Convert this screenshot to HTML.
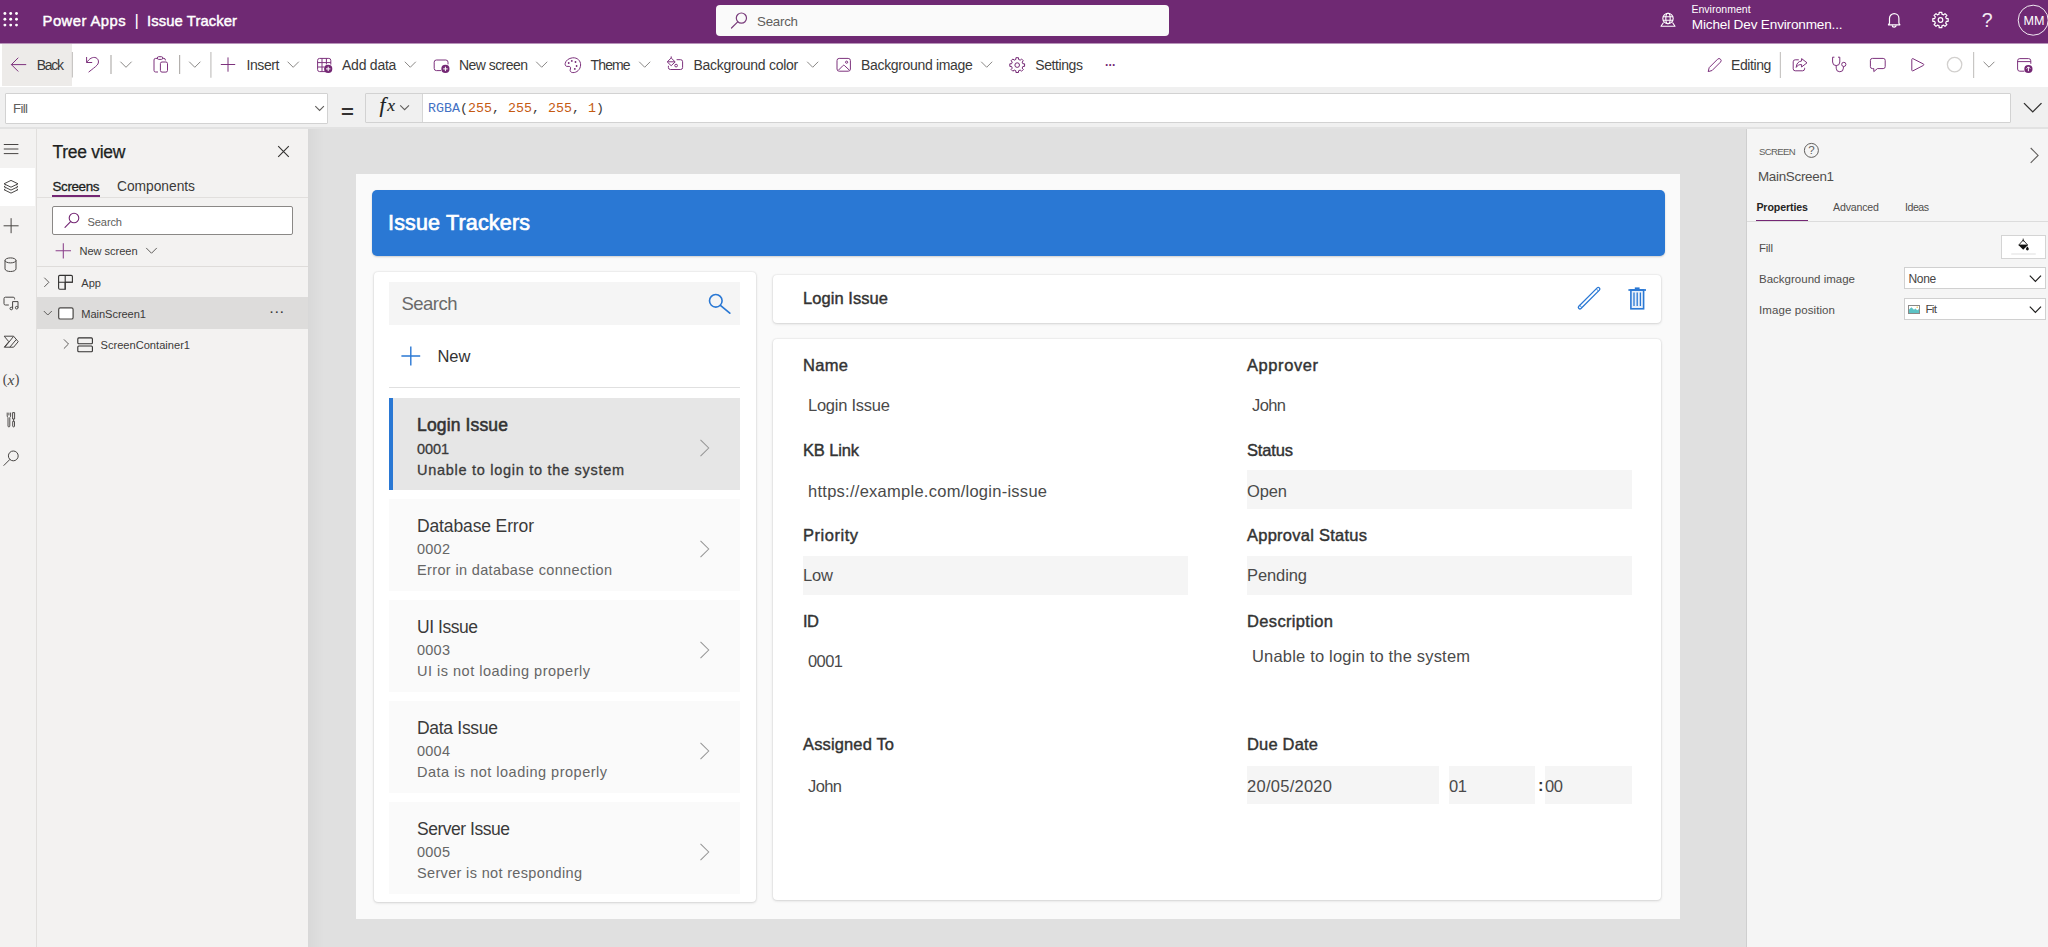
<!DOCTYPE html>
<html lang="en"><head><meta charset="utf-8"><title>Issue Tracker - Power Apps</title>
<style>
html,body{margin:0;padding:0;}
body{width:2048px;height:947px;overflow:hidden;position:relative;background:#e0e0e0;font-family:'Liberation Sans', sans-serif;}
.b{position:absolute;box-sizing:border-box;}
.t{position:absolute;white-space:pre;line-height:1;}
.i{position:absolute;overflow:visible;}
</style></head>
<body>
<div class="b" style="left:0px;top:0px;width:2048px;height:43px;background:#6f2973;"></div>
<div class="b" style="left:0px;top:43px;width:2048px;height:1px;background:#b794b9;"></div>
<div class="b" style="left:716px;top:5px;width:453px;height:30.5px;background:#fafafa;border-radius:4px;"></div>
<div class="b" style="left:0px;top:44px;width:2048px;height:43px;background:#ffffff;"></div>
<div class="b" style="left:2px;top:44px;width:70px;height:42px;background:#edebe9;"></div>
<div class="b" style="left:0px;top:87px;width:2048px;height:41px;background:#f0f0f0;"></div>
<div class="b" style="left:5px;top:93px;width:323px;height:30.6px;background:#ffffff;border:1px solid #d2d2d2;border-radius:1px;"></div>
<div class="b" style="left:364.5px;top:92.5px;width:1646.9px;height:30.1px;background:#ffffff;border:1px solid #d2d2d2;border-radius:1px;"></div>
<div class="b" style="left:365.5px;top:93.5px;width:57.5px;height:28.1px;background:#f0f0f0;border-right:1px solid #d6d6d6;"></div>
<div class="b" style="left:0px;top:128px;width:37px;height:819px;background:#f3f2f1;border-right:1px solid #e1dfdd;"></div>
<div class="b" style="left:0px;top:168px;width:35px;height:38px;background:#ffffff;"></div>
<div class="b" style="left:37px;top:128px;width:271px;height:819px;background:#f3f2f1;"></div>
<div class="b" style="left:308px;top:128px;width:16px;height:819px;background:linear-gradient(90deg,#d8d8d8,#e0e0e0);"></div>
<div class="b" style="left:37px;top:197px;width:271px;height:1px;background:#e1dfdd;"></div>
<div class="b" style="left:52px;top:195px;width:48px;height:2px;background:#742774;"></div>
<div class="b" style="left:52px;top:206px;width:241px;height:29px;background:#ffffff;border:1px solid #8a8886;border-radius:2px;"></div>
<div class="b" style="left:37px;top:266px;width:271px;height:1.2px;background:#dedcda;"></div>
<div class="b" style="left:37px;top:297.3px;width:271px;height:31.3px;background:#dddcdb;"></div>
<div class="b" style="left:1745.6px;top:128px;width:1.4px;height:819px;background:#cfcfcf;"></div>
<div class="b" style="left:1747px;top:128px;width:301px;height:819px;background:#f5f5f5;"></div>
<div class="b" style="left:1747px;top:221px;width:301px;height:1px;background:#dcdcdc;"></div>
<div class="b" style="left:1756px;top:219.6px;width:52px;height:1.8px;background:#742774;"></div>
<div class="b" style="left:2001px;top:235px;width:45px;height:23.6px;background:#ffffff;border:1px solid #d4d4d4;"></div>
<div class="b" style="left:2011px;top:252.8px;width:25px;height:2.6px;background:#efefef;border-radius:1px;"></div>
<div class="b" style="left:1904px;top:267px;width:142.2px;height:22.4px;background:#ffffff;border:1px solid #d0d0d0;"></div>
<div class="b" style="left:1904px;top:297.6px;width:142.2px;height:22.8px;background:#ffffff;border:1px solid #d0d0d0;"></div>
<div class="b" style="left:0px;top:127px;width:2048px;height:1.6px;background:#e2e2e2;"></div>
<div class="b" style="left:356.1px;top:174.4px;width:1324.2px;height:745.1px;background:#fafafa;"></div>
<div class="b" style="left:372px;top:190px;width:1293px;height:66px;background:#2a78d4;border-radius:5px;box-shadow:0 1px 2px rgba(0,0,0,.18);"></div>
<div class="b" style="left:374px;top:272px;width:382px;height:630px;background:#ffffff;box-shadow:0 0 2px rgba(0,0,0,.14),0 1px 3px rgba(0,0,0,.12);border-radius:4px;"></div>
<div class="b" style="left:773px;top:275px;width:888px;height:48px;background:#ffffff;box-shadow:0 0 2px rgba(0,0,0,.14),0 1px 3px rgba(0,0,0,.12);border-radius:4px;"></div>
<div class="b" style="left:773px;top:339px;width:888px;height:561px;background:#ffffff;box-shadow:0 0 2px rgba(0,0,0,.14),0 1px 3px rgba(0,0,0,.12);border-radius:4px;"></div>
<div class="b" style="left:389px;top:282px;width:351px;height:43px;background:#f5f5f5;"></div>
<div class="b" style="left:389px;top:386.5px;width:351px;height:1px;background:#e0e0e0;"></div>
<div class="b" style="left:389px;top:398px;width:351px;height:92px;background:#e6e6e6;border-left:4px solid #2a78d4;"></div>
<div class="b" style="left:389px;top:499px;width:351px;height:92px;background:#fafafa;"></div>
<div class="b" style="left:389px;top:600px;width:351px;height:92px;background:#fafafa;"></div>
<div class="b" style="left:389px;top:701px;width:351px;height:92px;background:#fafafa;"></div>
<div class="b" style="left:389px;top:802px;width:351px;height:92px;background:#fafafa;"></div>
<div class="b" style="left:803px;top:556px;width:385px;height:38.6px;background:#f5f5f5;"></div>
<div class="b" style="left:1247px;top:470px;width:385px;height:38.6px;background:#f5f5f5;"></div>
<div class="b" style="left:1247px;top:556px;width:385px;height:38.6px;background:#f5f5f5;"></div>
<div class="b" style="left:1247px;top:765.6px;width:192px;height:38.2px;background:#f5f5f5;"></div>
<div class="b" style="left:1449px;top:765.6px;width:86.4px;height:38.2px;background:#f5f5f5;"></div>
<div class="b" style="left:1545.4px;top:765.6px;width:86.6px;height:38.2px;background:#f5f5f5;"></div>
<svg class="i" style="left:0;top:0" width="2048" height="947" viewBox="0 0 2048 947" fill="none"><circle cx="4.9" cy="13.5" r="1.45" fill="#fff"/><circle cx="10.7" cy="13.5" r="1.45" fill="#fff"/><circle cx="16.5" cy="13.5" r="1.45" fill="#fff"/><circle cx="4.9" cy="19.3" r="1.45" fill="#fff"/><circle cx="10.7" cy="19.3" r="1.45" fill="#fff"/><circle cx="16.5" cy="19.3" r="1.45" fill="#fff"/><circle cx="4.9" cy="25.1" r="1.45" fill="#fff"/><circle cx="10.7" cy="25.1" r="1.45" fill="#fff"/><circle cx="16.5" cy="25.1" r="1.45" fill="#fff"/><circle cx="741.4" cy="18.1" r="5.1" stroke="#7a3d7c" stroke-width="1.2"/><path d="M737.7 21.8 L731.5 28" stroke="#7a3d7c" stroke-width="1.2" stroke-linecap="round"/><g stroke="#fff" stroke-width="1.1"><circle cx="1668" cy="18.5" r="5.2"/><ellipse cx="1668" cy="18.5" rx="2.2" ry="5.2"/><path d="M1663 16.8 H1673 M1663 20.3 H1673"/><path d="M1663.5 22.5 L1661 26.3 H1675 L1672.5 22.5" stroke-linejoin="round"/></g><path d="M1889.5 23.2 V18.3 a4.7 4.7 0 0 1 9.4 0 V23.2 l1 1.6 H1888.4 Z" stroke="#fff" stroke-width="1.2" stroke-linejoin="round"/><path d="M1892.3 25.2 a1.9 1.9 0 0 0 3.8 0" stroke="#fff" stroke-width="1.2"/><path d="M1939.16 12.32 L1941.84 12.32 L1941.90 14.17 L1943.63 14.88 L1944.99 13.62 L1946.88 15.51 L1945.62 16.87 L1946.33 18.60 L1948.18 18.66 L1948.18 21.34 L1946.33 21.40 L1945.62 23.13 L1946.88 24.49 L1944.99 26.38 L1943.63 25.12 L1941.90 25.83 L1941.84 27.68 L1939.16 27.68 L1939.10 25.83 L1937.37 25.12 L1936.01 26.38 L1934.12 24.49 L1935.38 23.13 L1934.67 21.40 L1932.82 21.34 L1932.82 18.66 L1934.67 18.60 L1935.38 16.87 L1934.12 15.51 L1936.01 13.62 L1937.37 14.88 L1939.10 14.17 Z" stroke="#fff" stroke-width="1.2" stroke-linejoin="round"/><circle cx="1940.5" cy="20" r="2.3" stroke="#fff" stroke-width="1.2"/><circle cx="2033.2" cy="20.2" r="15" stroke="#fff" stroke-width="1" opacity="0.9"/><g stroke="#7d327d" stroke-width="1.0"><path d="M25.8 64.6 H11.6 M18 58 L11.4 64.6 L18 71.2" stroke-linecap="round" stroke-linejoin="round"/><path d="M86.6 57.4 V62.5 H91.8" stroke-linecap="round" stroke-linejoin="round"/><path d="M86.9 62.3 C89 58.6 93 56.5 96 57.8 C98.7 59 99.3 62.6 97.2 65 C95.6 66.8 92 69.4 88.9 71.9" stroke-linecap="round"/><path d="M157.4 58.4 H155.6 a1.6 1.6 0 0 0 -1.6 1.6 V70.4 a1.6 1.6 0 0 0 1.6 1.6 H158 M162.6 58.4 H163.8 a1.6 1.6 0 0 1 1.6 1.6 V60.4"/><rect x="157.3" y="56.7" width="5.5" height="2.7" rx="1.35"/><rect x="160.4" y="62" width="7.1" height="10.1" rx="1.6"/><path d="M221.2 64.5 H234.8 M228 57.8 V71.3" stroke-linecap="round"/><path d="M326 71.6 H319.6 a2 2 0 0 1 -2 -2 V60.4 a2 2 0 0 1 2 -2 H328.8 a2 2 0 0 1 2 2 V64.6"/><path d="M317.6 62.6 H330.8 M317.6 67 H324.4 M322 58.4 V71.6 M326.4 58.4 V64.4"/><circle cx="328.2" cy="68.9" r="4.1" fill="#742774" stroke="none"/><path d="M326 68.9 H330.4 M328.2 66.7 V71.1" stroke="#fff" stroke-width="1"/><path d="M441 70.6 H436.4 a2.2 2.2 0 0 1 -2.2 -2.2 V62.2 a2.2 2.2 0 0 1 2.2 -2.2 H445.8 a2.2 2.2 0 0 1 2.2 2.2 V64.4"/><circle cx="445.4" cy="68.9" r="4.1" fill="#742774" stroke="none"/><path d="M443.2 68.9 H447.6 M445.4 66.7 V71.1" stroke="#fff" stroke-width="1"/><path d="M572.6 57.8 C577.4 57.4 580.8 60.8 580.6 65 C580.4 69.6 576.8 72.8 572.8 72.6 C570.4 72.4 569.6 70.8 570.4 69 C571.2 67.2 569.8 66 568 66.4 C566 66.8 564.8 65.4 565.2 63.4 C565.8 60.4 568.8 58.2 572.6 57.8 Z"/><circle cx="568.7" cy="63" r="0.9" fill="#742774" stroke="none"/><circle cx="571.8" cy="60.9" r="0.9" fill="#742774" stroke="none"/><circle cx="575.5" cy="62" r="0.9" fill="#742774" stroke="none"/><circle cx="576.6" cy="66" r="0.9" fill="#742774" stroke="none"/><circle cx="574.8" cy="68.9" r="0.9" fill="#742774" stroke="none"/><path d="M676.6 59.7 H680.6 a2 2 0 0 1 2 2 V67.5 a2 2 0 0 1 -2 2 H670.4 a2 2 0 0 1 -2 -2 V65.8"/><path d="M667.2 61.9 L671.2 58 L675.2 61.9 L671.2 65.7 Z M671.2 58.2 V56.4 M667.6 61.8 H674.8" stroke-linejoin="round"/><circle cx="676.1" cy="65.6" r="1.35"/><rect x="837" y="58.4" width="13.4" height="12.8" rx="2.2"/><circle cx="846.6" cy="62.2" r="1.1"/><path d="M838.6 70 L843.2 65.4 a0.8 0.8 0 0 1 1.1 0 L849.2 70" stroke-linejoin="round"/><path d="M1015.91 57.71 L1018.49 57.71 L1018.55 59.46 L1020.23 60.15 L1021.51 58.96 L1023.34 60.79 L1022.15 62.07 L1022.84 63.75 L1024.59 63.81 L1024.59 66.39 L1022.84 66.45 L1022.15 68.13 L1023.34 69.41 L1021.51 71.24 L1020.23 70.05 L1018.55 70.74 L1018.49 72.49 L1015.91 72.49 L1015.85 70.74 L1014.17 70.05 L1012.89 71.24 L1011.06 69.41 L1012.25 68.13 L1011.56 66.45 L1009.81 66.39 L1009.81 63.81 L1011.56 63.75 L1012.25 62.07 L1011.06 60.79 L1012.89 58.96 L1014.17 60.15 L1015.85 59.46 Z" stroke="#742774" stroke-width="1.0" stroke-linejoin="round"/><circle cx="1017.2" cy="65.1" r="2.3" stroke="#742774" stroke-width="1.0"/><path d="M1708.2 71.6 L1709.2 67.6 L1717.6 59.2 a2 2 0 0 1 2.9 2.9 L1712.1 70.5 Z" stroke-linejoin="round"/><path d="M1798.4 59.8 H1795.2 a2 2 0 0 0 -2 2 V68.8 a2 2 0 0 0 2 2 H1802.6 a2 2 0 0 0 2 -2 V68.2" stroke-linecap="round"/><path d="M1801.6 58.6 L1807 62.8 L1801.6 67 V64.6 C1799 64.4 1797.4 65.4 1796.2 67.4 C1796.4 63.8 1798.2 61.4 1801.6 61 Z" stroke-linejoin="round"/><path d="M1834 57.2 H1832.6 V62 a3.6 3.6 0 0 0 7.2 0 V57.2 H1838.4" stroke-linejoin="round" stroke-linecap="round"/><path d="M1836.2 65.6 V68.2 a3.6 3.6 0 0 0 7.2 0 V66.6"/><circle cx="1843.8" cy="64.4" r="2.1"/><path d="M1872.4 58.4 H1883.2 a2 2 0 0 1 2 2 V66.6 a2 2 0 0 1 -2 2 H1877.4 L1873.8 71.6 V68.6 H1872.4 a2 2 0 0 1 -2 -2 V60.4 a2 2 0 0 1 2 -2 Z" stroke-linejoin="round"/><path d="M1911.8 59.4 a0.8 0.8 0 0 1 1.2 -0.7 L1923.4 64 a0.8 0.8 0 0 1 0 1.4 L1913 70.8 a0.8 0.8 0 0 1 -1.2 -0.7 Z" stroke-linejoin="round"/><path d="M2024.4 71.2 H2019.8 a2.2 2.2 0 0 1 -2.2 -2.2 V60.8 a2.2 2.2 0 0 1 2.2 -2.2 H2028.6 a2.2 2.2 0 0 1 2.2 2.2 V63.8 M2017.6 61.6 H2030.8"/><circle cx="2028.4" cy="69" r="4.1" fill="#742774" stroke="none"/><path d="M2028.4 71.2 V67 M2026.6 68.6 L2028.4 66.8 L2030.2 68.6" stroke="#fff" stroke-width="1"/><path d="M120.4 61.70 L126.00 67.30 L131.6 61.70" stroke="#8a8886" stroke-width="1.0"/><path d="M189.2 61.70 L194.80 67.30 L200.4 61.70" stroke="#8a8886" stroke-width="1.0"/><path d="M287.6 61.70 L293.20 67.30 L298.8 61.70" stroke="#8a8886" stroke-width="1.0"/><path d="M404.8 61.75 L410.30 67.25 L415.8 61.75" stroke="#8a8886" stroke-width="1.0"/><path d="M536.2 61.75 L541.70 67.25 L547.2 61.75" stroke="#8a8886" stroke-width="1.0"/><path d="M639.2 61.75 L644.70 67.25 L650.2 61.75" stroke="#8a8886" stroke-width="1.0"/><path d="M807.2 61.75 L812.70 67.25 L818.2 61.75" stroke="#8a8886" stroke-width="1.0"/><path d="M981.2 61.75 L986.70 67.25 L992.2 61.75" stroke="#8a8886" stroke-width="1.0"/><path d="M1983.6 61.80 L1989.00 67.20 L1994.4 61.80" stroke="#8a8886" stroke-width="1.0"/></g><circle cx="1954.6" cy="64.6" r="7.2" stroke="#d2d0ce" stroke-width="1.3"/><path d="M72.4 52 V77.6" stroke="#c8c6c4" stroke-width="1.2"/><path d="M111 55 V74" stroke="#b3b0ad" stroke-width="1.2"/><path d="M179.6 55 V74" stroke="#b3b0ad" stroke-width="1.2"/><path d="M210.9 52 V77.8" stroke="#c4c2c0" stroke-width="1.2"/><path d="M1780.4 52 V78" stroke="#c8c6c4" stroke-width="1.2"/><path d="M1973.6 52 V78" stroke="#c8c6c4" stroke-width="1.2"/><path d="M315.3 106.05 L319.60 110.35 L323.9 106.05" stroke="#605e5c" stroke-width="1.1"/><path d="M400.2 105.30 L404.60 109.70 L409 105.30" stroke="#605e5c" stroke-width="1.1"/><path d="M2024 103.12 L2032.75 111.88 L2041.5 103.12" stroke="#323130" stroke-width="1.4"/><g stroke="#484644" stroke-width="1.0"><path d="M3.8 144.5 H18.4 M3.8 149 H18.4 M3.8 153.6 H18.4"/><path d="M11 180.4 L18 183.8 L11 187.2 L4 183.8 Z" stroke-linejoin="round"/><path d="M5.4 185.9 L4 186.7 L11 190.1 L18 186.7 L16.6 185.9 M5.4 188.9 L4 189.7 L11 193.1 L18 189.7 L16.6 188.9" stroke-linejoin="round"/><path d="M3.6 225.8 H18.6 M11.1 218.2 V233.2"/><path d="M5 260.4 V268.8 C5 272.4 16 272.4 16 268.8 V260.4"/><ellipse cx="10.5" cy="260.4" rx="5.5" ry="2.5"/><path d="M8.8 305 H5.4 a1.4 1.4 0 0 1 -1.4 -1.4 V298.6 a1.4 1.4 0 0 1 1.4 -1.4 H13.2 a1.4 1.4 0 0 1 1.4 1.4 V299.4"/><path d="M12.6 308.4 V301.6 H18 V307.6"/><circle cx="11.3" cy="308.5" r="1.3"/><circle cx="16.7" cy="307.7" r="1.3"/><path d="M4.2 336.2 H13.6 L18.2 341.7 L13.6 347.2 H4.2 L8.8 341.7 Z" stroke-linejoin="round"/><path d="M13.4 336.6 L5 347 M16.2 339.6 L9.8 347.2"/><path d="M7.2 412.6 V416 a1.6 1.6 0 0 0 0.8 1.4 V426 a0.9 0.9 0 0 0 1.8 0 V417.4 a1.6 1.6 0 0 0 0.8 -1.4 V412.6 M8.9 412.6 V415.4" stroke-linejoin="round" stroke-width="0.95"/><path d="M12.6 412.6 H14.6 V419 H12.6 Z M13.6 419 V421 M12.7 421.4 h1.8 V426 a0.9 0.9 0 0 1 -1.8 0 Z" stroke-linejoin="round" stroke-width="0.95"/><circle cx="13.3" cy="455.9" r="4.9"/><path d="M9.8 459.5 L3.9 465.4" stroke-linecap="round"/></g><path d="M278.2 146.2 L288.8 156.8 M288.8 146.2 L278.2 156.8" stroke="#323130" stroke-width="1.1"/><circle cx="74" cy="218" r="4.8" stroke="#742774" stroke-width="1.1"/><path d="M70.6 221.6 L65 227.4" stroke="#742774" stroke-width="1.1" stroke-linecap="round"/><path d="M55.6 250.8 H71 M63.3 243.2 V258.4" stroke="#8a3f8a" stroke-width="1.05"/><path d="M146.2 247.95 L151.50 253.25 L156.8 247.95" stroke="#605e5c" stroke-width="1.0"/><path d="M44.30 277.70 L48.90 282.30 L44.30 286.90" stroke="#605e5c" stroke-width="1.0"/><path d="M43.8 311.00 L47.80 315.00 L51.8 311.00" stroke="#605e5c" stroke-width="1.0"/><path d="M63.90 339.40 L68.50 344.00 L63.90 348.60" stroke="#605e5c" stroke-width="1.0"/><g stroke="#323130" stroke-width="1.1"><rect x="58.6" y="275.4" width="13.8" height="13.8" rx="1.2"/><path d="M65.2 275.4 V289.2 M58.6 282.2 H72.4"/></g><rect x="65.8" y="282.8" width="7.4" height="7.2" fill="#f3f2f1"/><path d="M65.2 282.2 V289.2 M65.2 282.2 H72.4" stroke="#323130" stroke-width="1.1"/><rect x="58.7" y="307.8" width="14.4" height="11.2" rx="1.6" stroke="#484644" stroke-width="1.2" fill="#fff"/><g stroke="#323130" stroke-width="1.1"><rect x="77.8" y="337.9" width="14.6" height="5.8" rx="1"/><rect x="77.8" y="346" width="14.6" height="5.8" rx="1"/></g><circle cx="1811.4" cy="150.4" r="7" stroke="#605e5c" stroke-width="1"/><path d="M2030.70 148.00 L2038.10 155.40 L2030.70 162.80" stroke="#605e5c" stroke-width="1.1"/><path d="M2029.8 275.70 L2035.40 281.30 L2041 275.70" stroke="#201f1e" stroke-width="1.2"/><path d="M2029.8 306.70 L2035.40 312.30 L2041 306.70" stroke="#201f1e" stroke-width="1.2"/><path d="M2018.8 245 L2023.2 240 L2027.6 245 Z" fill="#fff" stroke="#201f1e" stroke-width="0.9" stroke-linejoin="round"/><path d="M2018.4 245 H2028 L2023.2 249.8 Z" fill="#111"/><path d="M2023.2 238.6 V241.6" stroke="#201f1e" stroke-width="0.9"/><path d="M2027.4 246.4 c1 1.3 1.4 2 1.4 2.6 a1.4 1.4 0 0 1 -2.8 0 c0 -0.6 0.4 -1.3 1.4 -2.6 Z" fill="#111"/><rect x="1908.5" y="305.5" width="11" height="8" stroke="#8a8886" stroke-width="1" fill="#fff"/><path d="M1909 313 V309.6 L1911.4 307.2 L1914 309.8 L1915.4 308.6 L1917.2 310.2 L1919 309 V313 Z" fill="#5cc2c4"/><circle cx="1917.2" cy="307.3" r="0.8" fill="#f2c94c"/><circle cx="715.8" cy="300.8" r="6.3" stroke="#2a78d4" stroke-width="1.6"/><path d="M720.4 305.4 L729.8 313.2" stroke="#2a78d4" stroke-width="1.7" stroke-linecap="round"/><path d="M401.4 356 H420.2 M410.8 346.6 V365.4" stroke="#2a78d4" stroke-width="1.4"/><path d="M700.50 439.80 L708.70 448.00 L700.50 456.20" stroke="#969696" stroke-width="1.05"/><path d="M700.50 540.80 L708.70 549.00 L700.50 557.20" stroke="#969696" stroke-width="1.05"/><path d="M700.50 641.80 L708.70 650.00 L700.50 658.20" stroke="#969696" stroke-width="1.05"/><path d="M700.50 742.80 L708.70 751.00 L700.50 759.20" stroke="#969696" stroke-width="1.05"/><path d="M700.50 843.80 L708.70 852.00 L700.50 860.20" stroke="#969696" stroke-width="1.05"/><g transform="rotate(-45 1589.1 298.2)" stroke="#2a78d4" stroke-width="1.3"><rect x="1574.6" y="296.65" width="29" height="3.1" rx="1.5"/><path d="M1577.4 296.65 V299.75 M1600.8 296.65 V299.75" stroke-width="0.9"/></g><g stroke="#2a78d4"><rect x="1630.9" y="290" width="12.7" height="18.8" stroke-width="1.6" fill="#e6effa"/><path d="M1628.4 290 H1646" stroke-width="1.7"/><path d="M1634.8 288.4 H1639.6" stroke-width="2"/><path d="M1634 292.4 V306 M1637.2 292.4 V306 M1640.4 292.4 V306" stroke-width="1.3"/></g></svg>
<span class="t" style="left:42.6px;top:13.87px;font-size:14.8px;color:#ffffff;-webkit-text-stroke:0.45px #ffffff;letter-spacing:0.448px;">Power Apps</span>
<span class="t" style="left:134.4px;top:12.21px;font-size:17px;color:#ffffff;">|</span>
<span class="t" style="left:147px;top:13.87px;font-size:14.8px;color:#ffffff;-webkit-text-stroke:0.45px #ffffff;letter-spacing:0.099px;">Issue Tracker</span>
<span class="t" style="left:757px;top:14.54px;font-size:13.3px;color:#605e5c;letter-spacing:-0.228px;">Search</span>
<span class="t" style="left:1691.4px;top:4.11px;font-size:10.5px;color:#ffffff;letter-spacing:0.025px;">Environment</span>
<span class="t" style="left:1691.8px;top:17.69px;font-size:13.6px;color:#ffffff;letter-spacing:-0.177px;">Michel Dev Environmen...</span>
<span class="t" style="left:2023.5px;top:14.83px;font-size:12.6px;color:#ffffff;letter-spacing:0.016px;">MM</span>
<span class="t" style="left:1981.8px;top:10.89px;font-size:19.5px;color:#f3e9f4;">?</span>
<span class="t" style="left:36.8px;top:58.45px;font-size:14px;color:#3b3a39;letter-spacing:-1.308px;">Back</span>
<span class="t" style="left:246.5px;top:58.45px;font-size:14px;color:#3b3a39;letter-spacing:-0.423px;">Insert</span>
<span class="t" style="left:342px;top:58.45px;font-size:14px;color:#3b3a39;letter-spacing:-0.238px;">Add data</span>
<span class="t" style="left:459px;top:58.45px;font-size:14px;color:#3b3a39;letter-spacing:-0.547px;">New screen</span>
<span class="t" style="left:590.6px;top:58.45px;font-size:14px;color:#3b3a39;letter-spacing:-0.895px;">Theme</span>
<span class="t" style="left:693.4px;top:58.45px;font-size:14px;color:#3b3a39;letter-spacing:-0.277px;">Background color</span>
<span class="t" style="left:861px;top:58.45px;font-size:14px;color:#3b3a39;letter-spacing:-0.330px;">Background image</span>
<span class="t" style="left:1035.2px;top:58.45px;font-size:14px;color:#3b3a39;letter-spacing:-0.399px;">Settings</span>
<span class="t" style="left:1731px;top:58.45px;font-size:14px;color:#3b3a39;letter-spacing:-0.402px;">Editing</span>
<span class="t" style="left:1105px;top:59.24px;font-size:12px;color:#742774;font-weight:700;letter-spacing:-0.500px;">···</span>
<span class="t" style="left:341.4px;top:101.62px;font-size:19px;color:#323130;font-weight:700;transform:scaleX(1.16);transform-origin:0 0;">=</span>
<span class="t" style="left:13px;top:102.43px;font-size:13.2px;color:#605e5c;letter-spacing:-0.620px;">Fill</span>
<span class="t" style="left:379.6px;top:95.40px;font-size:21.5px;color:#201f1e;-webkit-text-stroke:0.15px #201f1e;font-family:'Liberation Serif', serif;font-style:italic;">f</span>
<span class="t" style="left:387.2px;top:96.90px;font-size:17.5px;color:#201f1e;-webkit-text-stroke:0.15px #201f1e;font-family:'Liberation Serif', serif;font-style:italic;">x</span>
<span class="t" style="left:428px;top:101.56px;font-size:13.3px;color:#4472c4;font-family:'Liberation Mono', monospace;letter-spacing:0.026px;">RGBA</span>
<span class="t" style="left:460px;top:101.56px;font-size:13.3px;color:#3b3a39;font-family:'Liberation Mono', monospace;">(</span>
<span class="t" style="left:468px;top:101.56px;font-size:13.3px;color:#c55a11;font-family:'Liberation Mono', monospace;letter-spacing:0.023px;">255</span>
<span class="t" style="left:492px;top:101.56px;font-size:13.3px;color:#3b3a39;font-family:'Liberation Mono', monospace;">,</span>
<span class="t" style="left:508px;top:101.56px;font-size:13.3px;color:#c55a11;font-family:'Liberation Mono', monospace;letter-spacing:0.023px;">255</span>
<span class="t" style="left:532px;top:101.56px;font-size:13.3px;color:#3b3a39;font-family:'Liberation Mono', monospace;">,</span>
<span class="t" style="left:548px;top:101.56px;font-size:13.3px;color:#c55a11;font-family:'Liberation Mono', monospace;letter-spacing:0.023px;">255</span>
<span class="t" style="left:572px;top:101.56px;font-size:13.3px;color:#3b3a39;font-family:'Liberation Mono', monospace;">,</span>
<span class="t" style="left:588px;top:101.56px;font-size:13.3px;color:#c55a11;font-family:'Liberation Mono', monospace;">1</span>
<span class="t" style="left:596px;top:101.56px;font-size:13.3px;color:#3b3a39;font-family:'Liberation Mono', monospace;">)</span>
<span class="t" style="left:52.6px;top:143.59px;font-size:17.5px;color:#201f1e;-webkit-text-stroke:0.25px #201f1e;letter-spacing:-0.302px;">Tree view</span>
<span class="t" style="left:52.5px;top:179.66px;font-size:13.4px;color:#201f1e;-webkit-text-stroke:0.3px #201f1e;letter-spacing:-0.354px;">Screens</span>
<span class="t" style="left:117px;top:179.92px;font-size:13.8px;color:#3b3a39;letter-spacing:-0.026px;">Components</span>
<span class="t" style="left:87.6px;top:216.60px;font-size:11.1px;color:#605e5c;letter-spacing:-0.151px;">Search</span>
<span class="t" style="left:79.5px;top:246.20px;font-size:11.1px;color:#3b3a39;letter-spacing:-0.053px;">New screen</span>
<span class="t" style="left:81.3px;top:278.00px;font-size:11.1px;color:#3b3a39;letter-spacing:-0.025px;">App</span>
<span class="t" style="left:81.3px;top:309.00px;font-size:11.1px;color:#3b3a39;letter-spacing:-0.067px;">MainScreen1</span>
<span class="t" style="left:270px;top:307.49px;font-size:11px;color:#3b3a39;font-weight:700;letter-spacing:1.500px;">···</span>
<span class="t" style="left:100.5px;top:340.20px;font-size:11.1px;color:#3b3a39;letter-spacing:0.005px;">ScreenContainer1</span>
<span class="t" style="left:2.8px;top:373.00px;font-size:14px;color:#484644;font-family:'Liberation Serif', serif;">(</span>
<span class="t" style="left:7.4px;top:371.80px;font-size:15.5px;color:#484644;font-family:'Liberation Serif', serif;font-style:italic;">x</span>
<span class="t" style="left:14.8px;top:373.00px;font-size:14px;color:#484644;font-family:'Liberation Serif', serif;">)</span>
<span class="t" style="left:1759px;top:147.07px;font-size:9.6px;color:#605e5c;letter-spacing:-0.677px;">SCREEN</span>
<span class="t" style="left:1758px;top:170.26px;font-size:13.4px;color:#504e4c;letter-spacing:-0.291px;">MainScreen1</span>
<span class="t" style="left:1756.4px;top:201.83px;font-size:10.6px;color:#252423;font-weight:700;letter-spacing:-0.090px;">Properties</span>
<span class="t" style="left:1833px;top:201.83px;font-size:10.6px;color:#504e4c;letter-spacing:-0.161px;">Advanced</span>
<span class="t" style="left:1905px;top:201.83px;font-size:10.6px;color:#504e4c;letter-spacing:-0.480px;">Ideas</span>
<span class="t" style="left:1759px;top:243.07px;font-size:11.5px;color:#504e4c;letter-spacing:-0.234px;">Fill</span>
<span class="t" style="left:1759px;top:273.87px;font-size:11.5px;color:#504e4c;letter-spacing:0.006px;">Background image</span>
<span class="t" style="left:1759px;top:304.67px;font-size:11.5px;color:#504e4c;letter-spacing:0.093px;">Image position</span>
<span class="t" style="left:1908.4px;top:273.24px;font-size:12px;color:#484644;letter-spacing:-0.296px;">None</span>
<span class="t" style="left:1925.4px;top:304.21px;font-size:11.8px;color:#484644;letter-spacing:-0.755px;">Fit</span>
<span class="t" style="left:1808.2px;top:145.07px;font-size:11.5px;color:#605e5c;">?</span>
<span class="t" style="left:388px;top:212.80px;font-size:21.5px;color:#ffffff;-webkit-text-stroke:0.7px #ffffff;letter-spacing:0.169px;">Issue Trackers</span>
<span class="t" style="left:401.4px;top:294.74px;font-size:18.5px;color:#6a6a6a;letter-spacing:-0.485px;">Search</span>
<span class="t" style="left:437.5px;top:347.83px;font-size:16.5px;color:#333333;letter-spacing:-0.058px;">New</span>
<span class="t" style="left:417px;top:417.19px;font-size:17.5px;color:#333333;-webkit-text-stroke:0.55px #333333;letter-spacing:0.148px;">Login Issue</span>
<span class="t" style="left:417px;top:441.73px;font-size:14.5px;color:#3a3a3a;-webkit-text-stroke:0.3px #3a3a3a;letter-spacing:-0.089px;">0001</span>
<span class="t" style="left:417px;top:462.73px;font-size:14.5px;color:#3a3a3a;-webkit-text-stroke:0.3px #3a3a3a;letter-spacing:0.714px;">Unable to login to the system</span>
<span class="t" style="left:417px;top:518.19px;font-size:17.5px;color:#3a3a3a;letter-spacing:-0.129px;">Database Error</span>
<span class="t" style="left:417px;top:542.23px;font-size:14.5px;color:#666666;letter-spacing:0.245px;">0002</span>
<span class="t" style="left:417px;top:563.23px;font-size:14.5px;color:#666666;letter-spacing:0.355px;">Error in database connection</span>
<span class="t" style="left:417px;top:619.19px;font-size:17.5px;color:#3a3a3a;letter-spacing:-0.458px;">UI Issue</span>
<span class="t" style="left:417px;top:643.23px;font-size:14.5px;color:#666666;letter-spacing:0.245px;">0003</span>
<span class="t" style="left:417px;top:664.23px;font-size:14.5px;color:#666666;letter-spacing:0.504px;">UI is not loading properly</span>
<span class="t" style="left:417px;top:720.19px;font-size:17.5px;color:#3a3a3a;letter-spacing:-0.295px;">Data Issue</span>
<span class="t" style="left:417px;top:744.23px;font-size:14.5px;color:#666666;letter-spacing:0.245px;">0004</span>
<span class="t" style="left:417px;top:765.23px;font-size:14.5px;color:#666666;letter-spacing:0.499px;">Data is not loading properly</span>
<span class="t" style="left:417px;top:821.19px;font-size:17.5px;color:#3a3a3a;letter-spacing:-0.476px;">Server Issue</span>
<span class="t" style="left:417px;top:845.23px;font-size:14.5px;color:#666666;letter-spacing:0.245px;">0005</span>
<span class="t" style="left:417px;top:866.23px;font-size:14.5px;color:#666666;letter-spacing:0.340px;">Server is not responding</span>
<span class="t" style="left:803px;top:290.43px;font-size:16.5px;color:#333333;-webkit-text-stroke:0.42px #333333;letter-spacing:0.059px;">Login Issue</span>
<span class="t" style="left:803px;top:356.83px;font-size:16.5px;color:#333333;-webkit-text-stroke:0.42px #333333;letter-spacing:0.328px;">Name</span>
<span class="t" style="left:808px;top:397.03px;font-size:16.5px;color:#4a4a4a;letter-spacing:-0.241px;">Login Issue</span>
<span class="t" style="left:803px;top:442.23px;font-size:16.5px;color:#333333;-webkit-text-stroke:0.42px #333333;letter-spacing:-0.146px;">KB Link</span>
<span class="t" style="left:808px;top:482.63px;font-size:16.5px;color:#4a4a4a;letter-spacing:0.263px;">https://example.com/login-issue</span>
<span class="t" style="left:803px;top:527.23px;font-size:16.5px;color:#333333;-webkit-text-stroke:0.42px #333333;letter-spacing:0.522px;">Priority</span>
<span class="t" style="left:803px;top:567.03px;font-size:16.5px;color:#4a4a4a;letter-spacing:-0.141px;">Low</span>
<span class="t" style="left:803px;top:612.83px;font-size:16.5px;color:#333333;-webkit-text-stroke:0.42px #333333;letter-spacing:-0.500px;">ID</span>
<span class="t" style="left:808px;top:653.03px;font-size:16.5px;color:#4a4a4a;letter-spacing:-0.573px;">0001</span>
<span class="t" style="left:803px;top:736.23px;font-size:16.5px;color:#333333;-webkit-text-stroke:0.42px #333333;letter-spacing:0.141px;">Assigned To</span>
<span class="t" style="left:808px;top:777.63px;font-size:16.5px;color:#4a4a4a;letter-spacing:-0.594px;">John</span>
<span class="t" style="left:1247px;top:356.83px;font-size:16.5px;color:#333333;-webkit-text-stroke:0.42px #333333;letter-spacing:0.578px;">Approver</span>
<span class="t" style="left:1252px;top:397.03px;font-size:16.5px;color:#4a4a4a;letter-spacing:-0.594px;">John</span>
<span class="t" style="left:1247px;top:442.23px;font-size:16.5px;color:#333333;-webkit-text-stroke:0.42px #333333;letter-spacing:-0.156px;">Status</span>
<span class="t" style="left:1247px;top:482.63px;font-size:16.5px;color:#4a4a4a;letter-spacing:-0.125px;">Open</span>
<span class="t" style="left:1247px;top:527.23px;font-size:16.5px;color:#333333;-webkit-text-stroke:0.42px #333333;letter-spacing:0.251px;">Approval Status</span>
<span class="t" style="left:1247px;top:567.03px;font-size:16.5px;color:#4a4a4a;letter-spacing:-0.094px;">Pending</span>
<span class="t" style="left:1247px;top:612.83px;font-size:16.5px;color:#333333;-webkit-text-stroke:0.42px #333333;letter-spacing:0.345px;">Description</span>
<span class="t" style="left:1252px;top:647.63px;font-size:16.5px;color:#4a4a4a;letter-spacing:0.186px;">Unable to login to the system</span>
<span class="t" style="left:1247px;top:736.23px;font-size:16.5px;color:#333333;-webkit-text-stroke:0.42px #333333;letter-spacing:0.183px;">Due Date</span>
<span class="t" style="left:1247px;top:777.63px;font-size:16.5px;color:#4a4a4a;letter-spacing:0.267px;">20/05/2020</span>
<span class="t" style="left:1449px;top:777.63px;font-size:16.5px;color:#4a4a4a;letter-spacing:-0.359px;">01</span>
<span class="t" style="left:1545px;top:777.63px;font-size:16.5px;color:#4a4a4a;letter-spacing:-0.359px;">00</span>
<span class="t" style="left:1538px;top:776.53px;font-size:16.5px;color:#333333;font-weight:700;">:</span>
</body></html>
